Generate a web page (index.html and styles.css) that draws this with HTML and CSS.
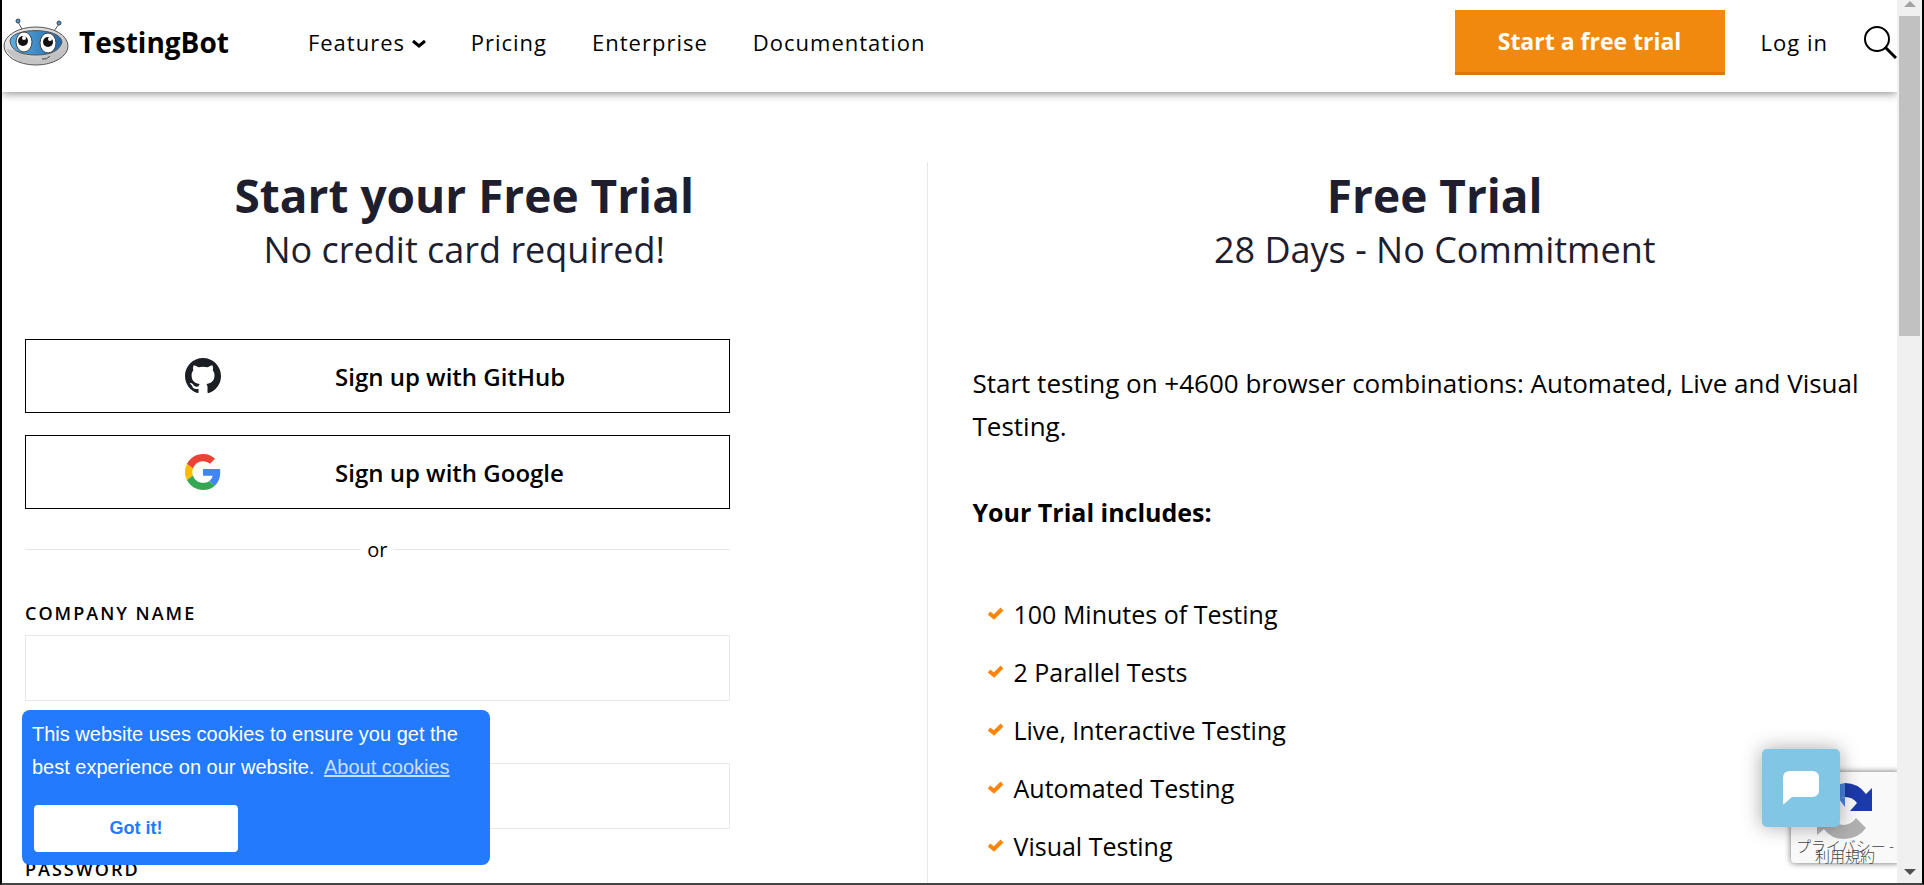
FILE: index.html
```html
<!DOCTYPE html>
<html lang="en">
<head>
    <meta charset="UTF-8">
    <meta name="viewport" content="width=device-width, initial-scale=1.0">
    <title>TestingBot - Free Trial</title>
    <link rel="stylesheet" href="styles.css">
</head>
<body>
    <div class="window">
        <div class="page">
            <header class="header">
                <a href="#" class="logo">
                    <svg width="67" height="48" viewBox="0 0 67 48">
                        <defs>
                            <linearGradient id="head" x1="0" y1="0" x2="1" y2="1">
                                <stop offset="0" stop-color="#f2f2f2"/>
                                <stop offset="1" stop-color="#b5b5b5"/>
                            </linearGradient>
                            <linearGradient id="visor" x1="0" y1="0" x2="1" y2="0">
                                <stop offset="0" stop-color="#5bb0e4"/>
                                <stop offset="1" stop-color="#2467a8"/>
                            </linearGradient>
                        </defs>
                        <path d="M16 4l4 7M57 6l-5 7" stroke="#555" stroke-width="1"/>
                        <circle cx="16" cy="3" r="2" fill="#3f9bd8" stroke="#444"/>
                        <circle cx="57" cy="5" r="2" fill="#3f9bd8" stroke="#444"/>
                        <ellipse cx="34" cy="28" rx="32" ry="19" fill="url(#head)" stroke="#555"/>
                        <path d="M4 31q9 15 30 15 9 0 14-2-20-1-31-11" fill="#c4c4c4"/>
                        <path d="M8 23C9 9 59 9 60 24c-2 8-10 13-26 13S9 32 8 23z" fill="url(#visor)" stroke="#555"/>
                        <ellipse cx="22" cy="24" rx="8" ry="10" fill="#fff" stroke="#444"/>
                        <ellipse cx="46" cy="25" rx="8" ry="10" fill="#fff" stroke="#444"/>
                        <circle cx="21" cy="23" r="5" fill="#111"/>
                        <circle cx="46" cy="24" r="5" fill="#111"/>
                        <circle cx="22" cy="20" r="2" fill="#fff"/>
                        <circle cx="48" cy="21" r="2" fill="#fff"/>
                        <path d="M40 41q5 1 8-3" fill="none" stroke="#444"/>
                    </svg>
                    <span>TestingBot</span>
                </a>
                <nav class="nav">
                    <a href="#">Features
                        <svg width="14" height="10" viewBox="0 0 14 10"><path d="M1 2l6 5 6-5" fill="none" stroke="#000" stroke-width="3"/></svg>
                    </a>
                    <a href="#">Pricing</a>
                    <a href="#">Enterprise</a>
                    <a href="#">Documentation</a>
                </nav>
                <div class="actions">
                    <a href="#" class="trial-btn">Start a free trial</a>
                    <a href="#" class="login">Log in</a>
                    <button type="button" class="search" aria-label="Search">
                        <svg width="33" height="33" viewBox="0 0 33 33"><circle cx="13" cy="13" r="12" fill="none" stroke="#000" stroke-width="2"/><path d="M21 21l11 11" stroke="#000" stroke-width="3"/></svg>
                    </button>
                </div>
            </header>

            <main class="columns">
                <section class="signup">
                    <div class="title">
                        <h1>Start your Free Trial</h1>
                        <p>No credit card required!</p>
                    </div>
                    <form class="form">
                        <button type="button" class="social">
                            <svg width="36" height="36" viewBox="0 0 16 16"><path fill="#1b1f23" d="M8 0C3.58 0 0 3.58 0 8c0 3.54 2.29 6.53 5.47 7.59.4.07.55-.17.55-.38 0-.19-.01-.82-.01-1.49-2.01.37-2.53-.49-2.69-.94-.09-.23-.48-.94-.82-1.13-.28-.15-.68-.52-.01-.53.63-.01 1.08.58 1.23.82.72 1.21 1.87.87 2.33.66.07-.52.28-.87.51-1.07-1.78-.2-3.64-.89-3.64-3.95 0-.87.31-1.59.82-2.15-.08-.2-.36-1.02.08-2.12 0 0 .67-.21 2.2.82.64-.18 1.32-.27 2-.27s1.36.09 2 .27c1.53-1.04 2.2-.82 2.2-.82.44 1.1.16 1.92.08 2.12.51.56.82 1.27.82 2.15 0 3.07-1.87 3.75-3.65 3.95.29.25.54.73.54 1.48 0 1.07-.01 1.93-.01 2.2 0 .21.15.46.55.38A8.01 8.01 0 0 0 16 8c0-4.42-3.58-8-8-8z"/></svg>
                            <span>Sign up with GitHub</span>
                        </button>
                        <button type="button" class="social">
                            <svg width="36" height="36" viewBox="0 0 48 48"><path fill="#EA4335" d="M24 9.5c3.54 0 6.71 1.22 9.21 3.6l6.85-6.85C35.9 2.38 30.47 0 24 0 14.62 0 6.51 5.38 2.56 13.22l7.98 6.19C12.43 13.72 17.74 9.5 24 9.5z"/><path fill="#4285F4" d="M46.98 24.55c0-1.57-.15-3.09-.38-4.55H24v9.02h12.94c-.58 2.96-2.26 5.48-4.78 7.18l7.73 6c4.51-4.18 7.09-10.36 7.09-17.65z"/><path fill="#FBBC05" d="M10.53 28.59c-.48-1.45-.76-2.99-.76-4.59s.27-3.14.76-4.59l-7.98-6.19C.92 16.46 0 20.12 0 24c0 3.88.92 7.54 2.56 10.78l7.97-6.19z"/><path fill="#34A853" d="M24 48c6.48 0 11.93-2.13 15.89-5.81l-7.73-6c-2.15 1.45-4.92 2.3-8.16 2.3-6.26 0-11.57-4.22-13.47-9.91l-7.98 6.19C6.51 42.62 14.62 48 24 48z"/></svg>
                            <span>Sign up with Google</span>
                        </button>
                        <div class="or">or</div>
                        <label for="company">Company name</label>
                        <input type="text" id="company">
                        <label for="email">Email</label>
                        <input type="email" id="email">
                        <label for="password">Password</label>
                        <input type="password" id="password">
                    </form>
                </section>

                <div class="divider"></div>

                <section class="trial">
                    <div class="title">
                        <h2>Free Trial</h2>
                        <p>28 Days - No Commitment</p>
                    </div>
                    <p class="text">Start testing on +4600 browser combinations: Automated, Live and Visual Testing.</p>
                    <h3 class="subtitle">Your Trial includes:</h3>
                    <ul class="includes">
                        <li><svg width="16" height="14" viewBox="0 0 16 14"><path d="M1 6l5 4 8-8" fill="none" stroke="#ff850a" stroke-width="4"/></svg>100 Minutes of Testing</li>
                        <li><svg width="16" height="14" viewBox="0 0 16 14"><path d="M1 6l5 4 8-8" fill="none" stroke="#ff850a" stroke-width="4"/></svg>2 Parallel Tests</li>
                        <li><svg width="16" height="14" viewBox="0 0 16 14"><path d="M1 6l5 4 8-8" fill="none" stroke="#ff850a" stroke-width="4"/></svg>Live, Interactive Testing</li>
                        <li><svg width="16" height="14" viewBox="0 0 16 14"><path d="M1 6l5 4 8-8" fill="none" stroke="#ff850a" stroke-width="4"/></svg>Automated Testing</li>
                        <li><svg width="16" height="14" viewBox="0 0 16 14"><path d="M1 6l5 4 8-8" fill="none" stroke="#ff850a" stroke-width="4"/></svg>Visual Testing</li>
                    </ul>
                </section>
            </main>

            <div class="cookies">
                <p>This website uses cookies to ensure you get the best experience on our website. <a href="#">About cookies</a></p>
                <button type="button">Got it!</button>
            </div>

            <div class="captcha">
                <svg width="56" height="56" viewBox="0 0 56 56">
                    <path d="M28 0v14q-7 1-9 9l-10-9Q16 1 28 0z" fill="#4a86e0"/>
                    <path d="M28 14v10l-6-8z" fill="#4a86e0"/>
                    <path d="M28 0q13 0 21 11l6-6v23H33l7-8q-4-6-12-6z" fill="#1c3aa9"/>
                    <path d="M0 27h22l-7 8q4 7 12 7 8-1 12-7l10 10q-8 11-22 11Q14 56 7 46l-7 6z" fill="#b0b0b0"/>
                </svg>
                <span class="privacy">プライバシー -</span>
                <span class="terms">利用規約</span>
            </div>

            <button type="button" class="chat" aria-label="Chat">
                <svg width="36" height="34" viewBox="0 0 36 34"><path d="M7 0h22q7 0 7 7v12q0 7-7 7H9l-8 7q-1 1-1-1V7q0-7 7-7z" fill="#fff"/></svg>
            </button>
        </div>

        <div class="scrollbar">
            <svg width="12" height="6" viewBox="0 0 12 6"><path d="M0 6l6-6 6 6z" fill="#a3a3a3"/></svg>
            <div class="thumb"></div>
            <svg width="12" height="6" viewBox="0 0 12 6"><path d="M0 0l6 6 6-6z" fill="#505050"/></svg>
        </div>
    </div>
</body>
</html>
```
FILE: styles.css
```css
* {
    margin: 0;
    padding: 0;
    box-sizing: border-box;
}

body {
    font-family: 'Open Sans', 'Noto Sans CJK JP', sans-serif;
    color: #000;
    background-color: #fff;
    overflow: hidden;
}

a {
    color: inherit;
    text-decoration: none;
}

button {
    font-family: inherit;
    border: none;
    background: none;
    cursor: pointer;
}

.window {
    display: flex;
    height: 100vh;
    border: solid #000;
    border-width: 0 2px 2px;
    border-bottom-color: #444;
}

.page {
    flex: 1;
    min-width: 0;
    position: relative;
    overflow: hidden;
}

/* Header */
.header {
    display: flex;
    align-items: center;
    height: 92px;
    padding-bottom: 8px;
    box-shadow: 0 1px 9px rgba(0, 0, 0, 0.5);
}

.logo {
    display: flex;
    align-items: center;
    gap: 10px;
    font-size: 28px;
    font-weight: 700;
}

.nav {
    display: flex;
    gap: 45px;
    margin-left: 79px;
    font-size: 22px;
    letter-spacing: 1px;
}

.nav svg {
    margin-bottom: 2px;
}

.actions {
    display: flex;
    align-items: center;
    margin-left: auto;
}

.trial-btn {
    width: 270px;
    line-height: 62px;
    text-align: center;
    font-size: 23px;
    font-weight: 700;
    color: #fff;
    background-color: #f1890e;
    border-bottom: 3px solid #d87a08;
}

.login {
    margin: 0 36px;
    font-size: 22px;
    letter-spacing: 1px;
}

.search svg {
    display: block;
}

/* Columns */
.columns {
    display: grid;
    grid-template-columns: 1fr 46px 1fr;
    padding-top: 70px;
}

.divider {
    border-left: 1px solid #e8e8e8;
}

.title {
    margin-bottom: 67px;
    text-align: center;
    color: #1e1e2f;
}

.title h1,
.title h2 {
    font-size: 46px;
    line-height: 66px;
}

.title p {
    font-size: 36px;
    line-height: 44px;
}

.form {
    margin: 0 197px 0 23px;
}

.social {
    display: flex;
    align-items: center;
    width: 100%;
    height: 74px;
    margin-bottom: 22px;
    padding-left: 159px;
    border: 1px solid #000;
    font-size: 24px;
    font-weight: 600;
}

.social span {
    margin-left: 114px;
}

.or {
    display: flex;
    align-items: center;
    gap: 6px;
    height: 36px;
    margin: 22px 0 26px;
    font-size: 20px;
}

.or::before,
.or::after {
    content: "";
    flex: 1;
    border-top: 1px solid #e8e8e8;
}

.form label {
    display: block;
    padding: 8px 0 10px;
    font-size: 18px;
    line-height: 24px;
    font-weight: 600;
    letter-spacing: 2px;
    text-transform: uppercase;
}

.form input {
    display: block;
    width: 100%;
    height: 66px;
    margin-bottom: 20px;
    padding: 0 16px;
    border: 1px solid #e8e8ec;
    font-size: 24px;
}

.trial .title {
    margin-bottom: 90px;
}

.text {
    margin-bottom: 43px;
    font-size: 26px;
    line-height: 43px;
}

.subtitle {
    font-size: 25px;
    line-height: 43px;
}

.includes {
    margin-top: 51px;
    list-style: none;
}

.includes li {
    display: flex;
    align-items: center;
    gap: 10px;
    padding-left: 15px;
    font-size: 25px;
    line-height: 58px;
}

/* Overlays */
.cookies {
    position: absolute;
    left: 20px;
    bottom: 18px;
    width: 468px;
    padding: 8px 10px 13px;
    border-radius: 8px;
    background-color: #237afc;
    color: #fff;
    font-family: 'Liberation Sans', sans-serif;
    font-size: 20px;
    line-height: 33px;
}

.cookies a {
    margin-left: 4px;
    color: #c8deff;
    text-decoration: underline;
}

.cookies button {
    display: block;
    width: 204px;
    height: 47px;
    margin: 21px 2px 0;
    border-radius: 4px;
    background-color: #fff;
    color: #237afc;
    font-size: 18px;
    font-weight: 700;
}

.captcha {
    position: absolute;
    right: -2px;
    bottom: 20px;
    display: flex;
    flex-direction: column;
    align-items: center;
    width: 108px;
    height: 91px;
    padding-top: 11px;
    border-radius: 4px 0 0 4px;
    background-color: #f9f9f9;
    box-shadow: 0 0 6px rgba(0, 0, 0, 0.6);
    color: #444;
    font-family: 'Noto Sans CJK JP', sans-serif;
    font-size: 15px;
    font-weight: 300;
    line-height: 10px;
    white-space: nowrap;
}

.captcha svg {
    flex: none;
    margin-bottom: 2px;
}

.chat {
    position: absolute;
    right: 57px;
    bottom: 56px;
    width: 78px;
    height: 78px;
    padding: 4px 0 0;
    border-radius: 5px;
    background-color: #82c6e6;
    box-shadow: 0 0 20px rgba(0, 0, 0, 0.35);
}

/* Scrollbar */
.scrollbar {
    display: flex;
    flex-direction: column;
    align-items: center;
    width: 25px;
    padding: 1px 2px 8px;
    background-color: #f0f0f0;
}

.thumb {
    width: 100%;
    height: 320px;
    margin: 9px 0 auto;
    background-color: #c1c1c1;
}
```
